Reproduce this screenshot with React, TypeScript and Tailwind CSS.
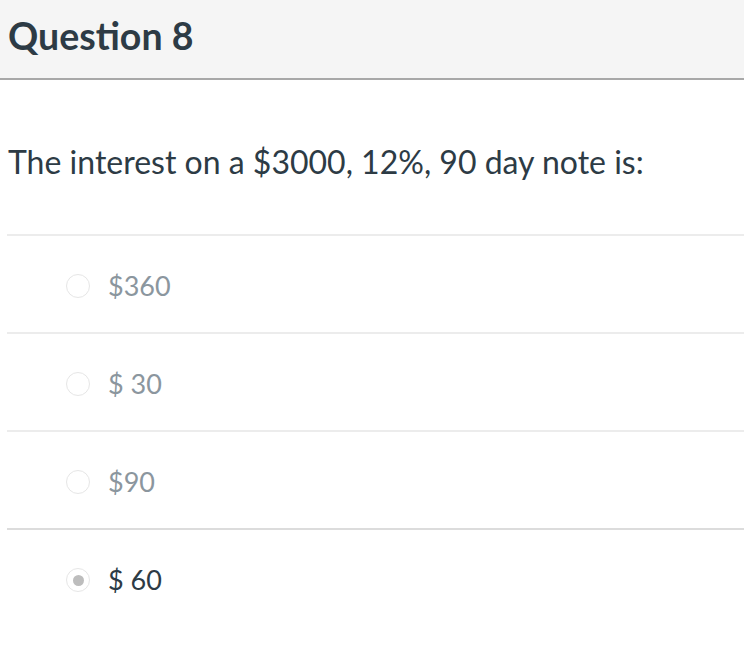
import React from 'react';

const answers = [
  { label: '$360', selected: false },
  { label: '$ 30', selected: false },
  { label: '$90', selected: false },
  { label: '$ 60', selected: true },
];

function Radio({ selected }: { selected: boolean }) {
  return (
    <span className="w-[24px] h-[24px] rounded-full border border-[#e6e6e6] bg-white flex items-center justify-center shrink-0">
      {selected && <span className="w-[11px] h-[11px] rounded-full bg-[#bdbdbd]" />}
    </span>
  );
}

export default function App() {
  return (
    <div className="w-[744px] h-[666px] bg-white overflow-hidden font-['Lato',sans-serif]">
      {/* Header */}
      <div className="h-[80px] bg-[#f5f5f5] border-b-2 border-[#a8a8a8] flex items-center px-[8px]">
        <h2 className="text-[37.5px] font-bold text-[#2d3b45] leading-none -mt-[6px]">Question 8</h2>
      </div>

      {/* Question text */}
      <div className="px-[8px] pt-[62px] pb-[52px]">
        <p className="text-[32px] text-[#2d3b45] leading-[40px]">The interest on a $3000, 12%, 90 day note is:</p>
      </div>

      {/* Answers */}
      <div className="ml-[7px]">
        {answers.map((a, i) => (
          <div
            key={a.label}
            className={`h-[98px] flex items-center gap-[18px] pl-[59px] pt-[4px] border-t-2 ${
              i === answers.length - 1 ? 'border-[#dcdcdc]' : 'border-[#ececec]'
            }`}
          >
            <Radio selected={a.selected} />
            <span className={`text-[27px] ${a.selected ? 'text-[#2d3b45]' : 'text-[#8b969e]'}`}>{a.label}</span>
          </div>
        ))}
      </div>
    </div>
  );
}
